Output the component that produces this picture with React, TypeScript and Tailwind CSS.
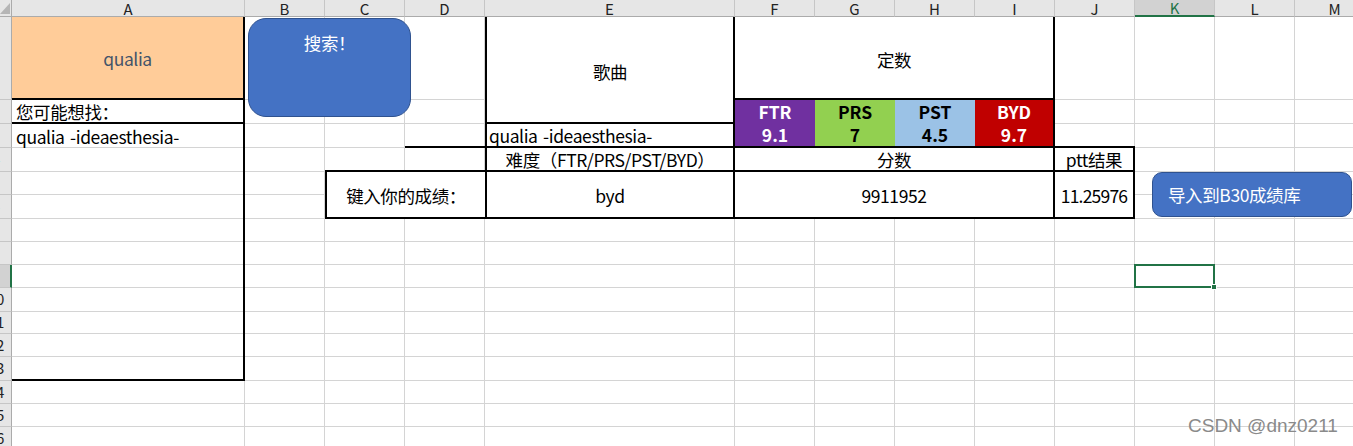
import React from "react";

const COLS = ["A", "B", "C", "D", "E", "F", "G", "H", "I", "J", "K", "L", "M"];
const ROWS = Array.from({ length: 16 }, (_, i) => i + 1);

const CELL = "flex items-center justify-center bg-white border-black pt-[3px]";
const LEVEL = "flex h-[23px] items-center justify-center leading-[22px]";

export default function App() {
  return (
    <div className="relative h-[446px] w-[1353px] overflow-hidden bg-white font-['Noto_Sans_CJK_SC',sans-serif] text-[17.5px] tracking-[-0.4px] [word-spacing:2px] text-black">
      <div className="grid grid-cols-[12px_233px_80px_80px_80px_250px_80px_80px_80px_80px_80px_80px_80px_80px] grid-rows-[17px_83px_24px_24px_24px_23px_24px_23px_23px_23px_24px_22px_23px_24px_23px_23px_24px]">
        {/* corner */}
        <div className="col-start-1 row-start-1 border-r border-b border-[#ababab] bg-[#e6e6e6]">
          <svg width="12" height="17" viewBox="0 0 12 17">
            <polygon points="10,3 10,14 0,14" fill="#b5b5b5" />
          </svg>
        </div>

        {/* column headers */}
        {COLS.map((c, i) => (
          <div
            key={c}
            style={{ gridColumn: i + 2, gridRow: 1 }}
            className={
              c === "K"
                ? "flex items-center justify-center border-r border-b-2 border-r-[#c6c6c6] border-b-[#217346] bg-[#d2d2d2] text-[15px] leading-[17px] tracking-normal text-[#217346]"
                : "flex items-center justify-center border-r border-b border-r-[#c6c6c6] border-b-[#ababab] bg-[#e6e6e6] text-[15px] leading-[17px] tracking-normal text-[#222]"
            }
          >
            {c}
          </div>
        ))}

        {/* row headers + gridlines */}
        {ROWS.map((r) => (
          <React.Fragment key={r}>
            <div
              style={{ gridColumn: 1, gridRow: r + 1 }}
              className={
                r === 9
                  ? "flex items-center justify-end overflow-hidden border-b border-r-2 border-b-[#c6c6c6] border-r-[#217346] bg-[#d2d2d2] text-[15px] tracking-normal text-[#217346]"
                  : "flex items-center justify-end overflow-hidden border-b border-r border-b-[#c6c6c6] border-r-[#ababab] bg-[#e6e6e6] text-[15px] tracking-normal text-[#222]"
              }
            >
              <span className="w-[30px] shrink-0 text-center">{r}</span>
            </div>
            {COLS.map((c, i) => (
              <div
                key={c}
                style={{ gridColumn: i + 2, gridRow: r + 1 }}
                className="border-r border-b border-[#d4d4d4]"
              />
            ))}
          </React.Fragment>
        ))}

        {/* A column */}
        <div className="col-start-2 row-start-2 flex items-center justify-center border-r-2 border-b-2 border-black bg-[#FFCC99] pt-[4px] text-[#44546A]">
          qualia
        </div>
        <div className="col-start-2 row-start-3 flex items-center border-r-2 border-b-2 border-black bg-white pl-[4px] pt-[2px]">
          您可能想找：
        </div>
        <div className="col-start-2 row-start-4 row-span-11 border-r-2 border-b-2 border-black" />
        <div className="col-start-2 row-start-4 flex items-center pl-[4px] pt-[2px]">qualia -ideaesthesia-</div>

        {/* song */}
        <div className={`${CELL} col-start-6 row-start-2 row-span-2 border-x-2 border-b-2 pt-[6px]`}>歌曲</div>
        <div className="col-start-6 row-start-4 flex items-center border-x-2 border-b-2 border-black bg-white pl-[2px] pt-[2px]">
          qualia -ideaesthesia-
        </div>
        <div className="col-start-5 row-start-4 border-b-2 border-black" />
        <div className="col-start-11 row-start-4 border-b-2 border-black" />

        {/* constants */}
        <div className={`${CELL} col-start-7 col-span-4 row-start-2 border-r-2 border-b-2 pt-[5px]`}>定数</div>
        <div className="col-start-7 row-start-3 row-span-2 flex flex-col border-b-2 border-black bg-[#7030A0] font-bold tracking-normal text-white">
          <div className={LEVEL}>FTR</div>
          <div className={LEVEL}>9.1</div>
        </div>
        <div className="col-start-8 row-start-3 row-span-2 flex flex-col border-b-2 border-black bg-[#92D050] font-bold tracking-normal text-black">
          <div className={LEVEL}>PRS</div>
          <div className={LEVEL}>7</div>
        </div>
        <div className="col-start-9 row-start-3 row-span-2 flex flex-col border-b-2 border-black bg-[#9BC2E6] font-bold tracking-normal text-black">
          <div className={LEVEL}>PST</div>
          <div className={LEVEL}>4.5</div>
        </div>
        <div className="col-start-10 row-start-3 row-span-2 flex flex-col border-r-2 border-b-2 border-black bg-[#C00000] font-bold tracking-normal text-white">
          <div className={LEVEL}>BYD</div>
          <div className={LEVEL}>9.7</div>
        </div>

        {/* row 4 headings */}
        <div className="col-start-4 row-start-5 border-b-2 border-black" />
        <div className="col-start-5 row-start-5 border-b-2 border-black" />
        <div className={`${CELL} col-start-6 row-start-5 border-x-2 border-b-2`}>难度（FTR/PRS/PST/BYD）</div>
        <div className={`${CELL} col-start-7 col-span-4 row-start-5 border-r-2 border-b-2`}>分数</div>
        <div className={`${CELL} col-start-11 row-start-5 border-r-2 border-b-2`}>ptt结果</div>

        {/* score row */}
        <div className={`${CELL} col-start-4 col-span-2 row-start-6 row-span-2 border-l-2 border-b-2`}>键入你的成绩：</div>
        <div className={`${CELL} col-start-6 row-start-6 row-span-2 border-x-2 border-b-2`}>byd</div>
        <div className={`${CELL} col-start-7 col-span-4 row-start-6 row-span-2 border-r-2 border-b-2`}>9911952</div>
        <div className={`${CELL} col-start-11 row-start-6 row-span-2 border-r-2 border-b-2 tracking-[-0.8px]`}>11.25976</div>

        {/* selected cell K9 */}
        <div className="relative col-start-12 row-start-10 -mt-px -ml-px border-2 border-[#217346]">
          <span className="absolute -right-[4px] -bottom-[4px] h-[6px] w-[6px] border border-white bg-[#217346]" />
        </div>
      </div>

      {/* shapes */}
      <div className="absolute left-[248px] top-[18px] flex h-[99px] w-[163px] justify-center rounded-[18px] border border-[#2F528F] bg-[#4472C4] pt-[11px] leading-[26px] text-white">
        搜索！
      </div>
      <div className="absolute left-[1152px] top-[172px] flex h-[45px] w-[200px] items-center rounded-[10px] border border-[#2F528F] bg-[#4472C4] pl-[15px] pt-[2px] text-white">
        导入到B30成绩库
      </div>

      <div className="absolute left-[1188px] top-[414px] font-['Liberation_Sans',Arial,sans-serif] text-[19px] leading-[24px] tracking-normal [word-spacing:normal] text-[#8a8a8a]">
        CSDN @dnz0211
      </div>
    </div>
  );
}
